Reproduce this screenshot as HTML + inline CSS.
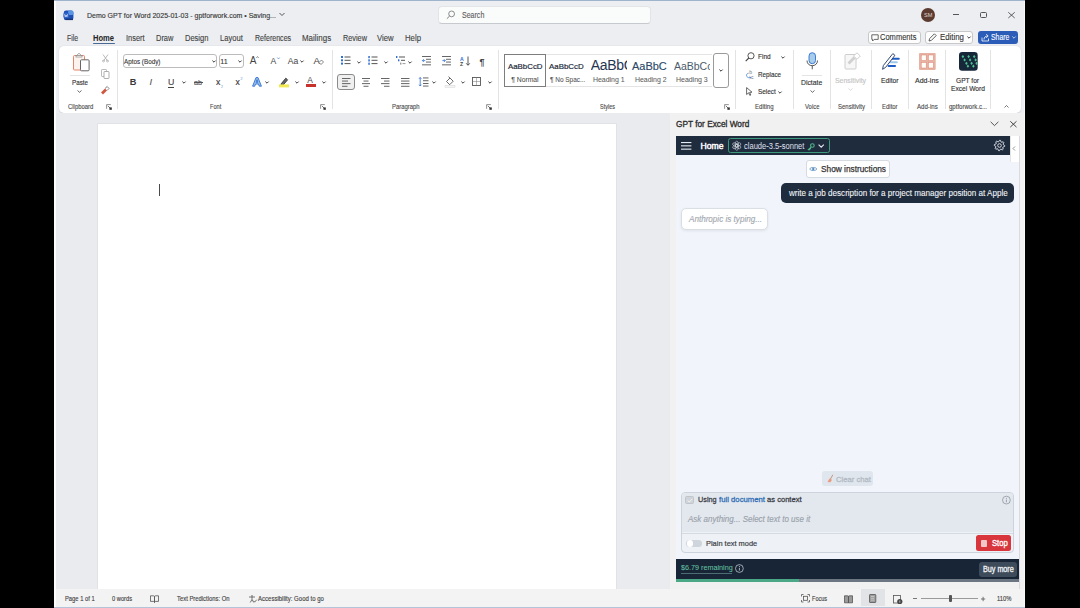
<!DOCTYPE html><html><head><meta charset="utf-8"><style>
html,body{margin:0;padding:0;}
body{width:1080px;height:608px;background:#000;position:relative;overflow:hidden;font-family:"Liberation Sans",sans-serif;}
.a{position:absolute;}
.t{position:absolute;white-space:nowrap;line-height:1;}
svg{overflow:visible}
</style></head><body>
<div class="a" style="left:54px;top:0px;width:971.00px;height:608.00px;background:#eceef1;"></div>
<div class="a" style="left:54px;top:0px;width:1.60px;height:608.00px;background:#fdfdfd;"></div>
<div class="a" style="left:1024px;top:0px;width:1.00px;height:608.00px;background:#f7f8fa;"></div>
<div class="a" style="left:54px;top:0px;width:971.00px;height:1.00px;background:#9fb3cc;"></div>
<svg class="a" style="left:63px;top:9.5px" width="11" height="11" viewBox="0 0 11 11"><rect x="0.8" y="0.5" width="9.6" height="9.6" rx="2.2" fill="#1f4fb5"/><rect x="5" y="0.5" width="5.4" height="4.5" rx="1.5" fill="#5b95e6"/><rect x="0.4" y="2.6" width="5.6" height="5.6" rx="2" fill="#2f63c9"/><path d="M1.6 4.2l.7 2.6.8-1.8.8 1.8.7-2.6" stroke="#e8eefa" stroke-width="0.7" fill="none"/><rect x="2.5" y="8.6" width="7.5" height="1.5" fill="#16357a"/></svg>
<div class="t" style="left:87.00px;top:12.00px;font-size:7.0px;color:#3a3a3a;-webkit-text-stroke:0.14px currentColor;">Demo GPT for Word 2025-01-03 - gptforwork.com • Saving...</div>
<svg class="a" style="left:279px;top:12px" width="6" height="5" viewBox="0 0 6 5"><path d="M0.5 1l2.5 2.5L5.5 1" stroke="#444" stroke-width="0.9" fill="none"/></svg>
<div class="a" style="left:438px;top:6px;width:212.50px;height:17.60px;background:#fafbfb;border:1px solid #e2e4e8;border-bottom:1.2px solid #c6c9ce;border-radius:4px;box-sizing:border-box;"></div>
<svg class="a" style="left:446px;top:10px" width="10" height="10" viewBox="0 0 10 10"><circle cx="5.6" cy="3.9" r="2.9" stroke="#707070" stroke-width="0.8" fill="none"/><path d="M3.6 6L0.9 8.7" stroke="#707070" stroke-width="0.9" /></svg>
<div class="t" style="left:462.00px;top:11.00px;font-size:8.5px;color:#606060;-webkit-text-stroke:0.12px currentColor;transform:scaleX(0.8280);transform-origin:0 0;">Search</div>
<div class="a" style="left:921px;top:7.8px;width:14px;height:14px;border-radius:50%;background:#5c3b30;"></div>
<div class="t" style="left:923.80px;top:13.00px;font-size:5.4px;color:#e0d4ce;-webkit-text-stroke:0px currentColor;transform:scaleX(1.0370);transform-origin:0 0;">SM</div>
<div class="a" style="left:952.6px;top:14.2px;width:6.20px;height:0.80px;background:#555;"></div>
<div class="a" style="left:980px;top:11.8px;width:7.00px;height:6.00px;border:0.9px solid #555;border-radius:1.5px;box-sizing:border-box;"></div>
<svg class="a" style="left:1008px;top:11.8px" width="7" height="6.2" viewBox="0 0 7 6.2"><path d="M0.3 0.3L6.7 6M6.7 0.3L0.3 6" stroke="#444" stroke-width="0.85"/></svg>
<div class="t" style="left:66.90px;top:34.00px;font-size:8.5px;color:#424242;-webkit-text-stroke:0.12px currentColor;transform:scaleX(0.8104);transform-origin:0 0;">File</div>
<div class="t" style="left:125.70px;top:34.00px;font-size:8.5px;color:#424242;-webkit-text-stroke:0.12px currentColor;transform:scaleX(0.8749);transform-origin:0 0;">Insert</div>
<div class="t" style="left:155.90px;top:34.00px;font-size:8.5px;color:#424242;-webkit-text-stroke:0.12px currentColor;transform:scaleX(0.8772);transform-origin:0 0;">Draw</div>
<div class="t" style="left:184.60px;top:34.00px;font-size:8.5px;color:#424242;-webkit-text-stroke:0.12px currentColor;transform:scaleX(0.8844);transform-origin:0 0;">Design</div>
<div class="t" style="left:219.60px;top:34.00px;font-size:8.5px;color:#424242;-webkit-text-stroke:0.12px currentColor;transform:scaleX(0.8934);transform-origin:0 0;">Layout</div>
<div class="t" style="left:254.60px;top:34.00px;font-size:8.5px;color:#424242;-webkit-text-stroke:0.12px currentColor;transform:scaleX(0.8305);transform-origin:0 0;">References</div>
<div class="t" style="left:302.40px;top:34.00px;font-size:8.5px;color:#424242;-webkit-text-stroke:0.12px currentColor;transform:scaleX(0.9334);transform-origin:0 0;">Mailings</div>
<div class="t" style="left:342.80px;top:34.00px;font-size:8.5px;color:#424242;-webkit-text-stroke:0.12px currentColor;transform:scaleX(0.8576);transform-origin:0 0;">Review</div>
<div class="t" style="left:377.40px;top:34.00px;font-size:8.5px;color:#424242;-webkit-text-stroke:0.12px currentColor;transform:scaleX(0.9086);transform-origin:0 0;">View</div>
<div class="t" style="left:404.60px;top:34.00px;font-size:8.5px;color:#424242;-webkit-text-stroke:0.12px currentColor;transform:scaleX(0.9152);transform-origin:0 0;">Help</div>
<div class="t" style="left:93.30px;top:34.00px;font-size:8.5px;color:#242424;-webkit-text-stroke:0.0px currentColor;font-weight:bold;transform:scaleX(0.8892);transform-origin:0 0;">Home</div>
<div class="a" style="left:93px;top:43.2px;width:21.50px;height:1.30px;background:#4a6a94;border-radius:1px;"></div>
<div class="a" style="left:868px;top:30.7px;width:52.60px;height:13.10px;background:#fdfdfd;border:1px solid #c8c8c8;border-radius:3px;box-sizing:border-box;"></div>
<svg class="a" style="left:871px;top:33.5px" width="8" height="8" viewBox="0 0 8 8"><path d="M0.8 0.8h6.4v4.6H3.2L1.6 7V5.4H0.8z" stroke="#444" stroke-width="0.8" fill="none" stroke-linejoin="round"/></svg>
<div class="t" style="left:880.00px;top:33.00px;font-size:8.4px;color:#333;-webkit-text-stroke:0.1px currentColor;transform:scaleX(0.8988);transform-origin:0 0;">Comments</div>
<div class="a" style="left:925.3px;top:30.7px;width:47.70px;height:13.10px;background:#fdfdfd;border:1px solid #c8c8c8;border-radius:3px;box-sizing:border-box;"></div>
<svg class="a" style="left:928px;top:32.8px" width="9" height="9" viewBox="0 0 9 9"><path d="M1 8L1.6 5.6 6.4 0.8 8.2 2.6 3.4 7.4z" stroke="#444" stroke-width="0.85" fill="none" stroke-linejoin="round"/></svg>
<div class="t" style="left:939.50px;top:33.00px;font-size:8.4px;color:#333;-webkit-text-stroke:0.1px currentColor;transform:scaleX(0.9344);transform-origin:0 0;">Editing</div>
<svg class="a" style="left:967px;top:35.8px" width="4" height="3" viewBox="0 0 4 3"><path d="M0.4 0.6L2 2.2 3.6 0.6" stroke="#333" stroke-width="0.95" fill="none"/></svg>
<div class="a" style="left:977.7px;top:30.7px;width:40.50px;height:13.10px;background:#2a5cb8;border-radius:3px;"></div>
<svg class="a" style="left:980.5px;top:32.5px" width="9" height="9" viewBox="0 0 9 9"><path d="M1 4.5v3.5h6.5V5.5" stroke="#fff" stroke-width="0.8" fill="none"/><path d="M3 6.5c0-2 1.3-3.5 3.6-3.5M5.2 1.2L7.2 3 5.2 4.8" stroke="#fff" stroke-width="0.8" fill="none"/></svg>
<div class="t" style="left:990.50px;top:33.00px;font-size:8.4px;color:#fff;-webkit-text-stroke:0.1px currentColor;transform:scaleX(0.8253);transform-origin:0 0;">Share</div>
<svg class="a" style="left:1011.5px;top:35.8px" width="4" height="3" viewBox="0 0 4 3"><path d="M0.3 0.5L2 2.2 3.7 0.5" stroke="#fff" stroke-width="0.7" fill="none"/></svg>
<div class="a" style="left:58.5px;top:46px;width:962.5px;height:66.6px;background:#fff;border-radius:5px;box-shadow:0 0.5px 1.5px rgba(0,0,0,0.13);"></div>
<div class="a" style="left:116.8px;top:50px;width:1.00px;height:59.00px;background:#e3e3e3;"></div>
<div class="a" style="left:331.5px;top:50px;width:1.00px;height:59.00px;background:#e3e3e3;"></div>
<div class="a" style="left:497.5px;top:50px;width:1.00px;height:59.00px;background:#e3e3e3;"></div>
<div class="a" style="left:735.0px;top:50px;width:1.00px;height:59.00px;background:#e3e3e3;"></div>
<div class="a" style="left:792.9px;top:50px;width:1.00px;height:59.00px;background:#e3e3e3;"></div>
<div class="a" style="left:830.3px;top:50px;width:1.00px;height:59.00px;background:#e3e3e3;"></div>
<div class="a" style="left:871.2px;top:50px;width:1.00px;height:59.00px;background:#e3e3e3;"></div>
<div class="a" style="left:907.5px;top:50px;width:1.00px;height:59.00px;background:#e3e3e3;"></div>
<div class="a" style="left:944.8px;top:50px;width:1.00px;height:59.00px;background:#e3e3e3;"></div>
<div class="a" style="left:989.7px;top:50px;width:1.00px;height:59.00px;background:#e3e3e3;"></div>
<div class="t" style="left:67.80px;top:103.00px;font-size:7.0px;color:#4a4a4a;-webkit-text-stroke:0.12px currentColor;transform:scaleX(0.8444);transform-origin:0 0;">Clipboard</div>
<div class="t" style="left:210.00px;top:103.00px;font-size:7.0px;color:#4a4a4a;-webkit-text-stroke:0.12px currentColor;transform:scaleX(0.8067);transform-origin:0 0;">Font</div>
<div class="t" style="left:391.70px;top:103.00px;font-size:7.0px;color:#4a4a4a;-webkit-text-stroke:0.12px currentColor;transform:scaleX(0.8443);transform-origin:0 0;">Paragraph</div>
<div class="t" style="left:600.00px;top:103.00px;font-size:7.0px;color:#4a4a4a;-webkit-text-stroke:0.12px currentColor;transform:scaleX(0.7869);transform-origin:0 0;">Styles</div>
<div class="t" style="left:755.30px;top:103.00px;font-size:7.0px;color:#4a4a4a;-webkit-text-stroke:0.12px currentColor;transform:scaleX(0.8643);transform-origin:0 0;">Editing</div>
<div class="t" style="left:804.90px;top:103.00px;font-size:7.0px;color:#4a4a4a;-webkit-text-stroke:0.12px currentColor;transform:scaleX(0.8409);transform-origin:0 0;">Voice</div>
<div class="t" style="left:837.70px;top:103.00px;font-size:7.0px;color:#4a4a4a;-webkit-text-stroke:0.12px currentColor;transform:scaleX(0.8569);transform-origin:0 0;">Sensitivity</div>
<div class="t" style="left:882.00px;top:103.00px;font-size:7.0px;color:#4a4a4a;-webkit-text-stroke:0.12px currentColor;transform:scaleX(0.8531);transform-origin:0 0;">Editor</div>
<div class="t" style="left:916.50px;top:103.00px;font-size:7.0px;color:#4a4a4a;-webkit-text-stroke:0.12px currentColor;transform:scaleX(0.8721);transform-origin:0 0;">Add-ins</div>
<div class="t" style="left:948.80px;top:103.00px;font-size:7.0px;color:#4a4a4a;-webkit-text-stroke:0.12px currentColor;transform:scaleX(0.8645);transform-origin:0 0;">gptforwork.c...</div>
<svg class="a" style="left:106.4px;top:103.5px" width="6" height="6" viewBox="0 0 6 6"><path d="M0.6 4.8V0.6H4.8" stroke="#777" stroke-width="0.8" fill="none"/><path d="M1.8 1.8L4.6 4.6" stroke="#555" stroke-width="0.8"/><rect x="3.4" y="3.4" width="2.4" height="2.4" fill="#333"/></svg>
<svg class="a" style="left:320.3px;top:103.5px" width="6" height="6" viewBox="0 0 6 6"><path d="M0.6 4.8V0.6H4.8" stroke="#777" stroke-width="0.8" fill="none"/><path d="M1.8 1.8L4.6 4.6" stroke="#555" stroke-width="0.8"/><rect x="3.4" y="3.4" width="2.4" height="2.4" fill="#333"/></svg>
<svg class="a" style="left:486px;top:103.5px" width="6" height="6" viewBox="0 0 6 6"><path d="M0.6 4.8V0.6H4.8" stroke="#777" stroke-width="0.8" fill="none"/><path d="M1.8 1.8L4.6 4.6" stroke="#555" stroke-width="0.8"/><rect x="3.4" y="3.4" width="2.4" height="2.4" fill="#333"/></svg>
<svg class="a" style="left:724px;top:103.5px" width="6" height="6" viewBox="0 0 6 6"><path d="M0.6 4.8V0.6H4.8" stroke="#777" stroke-width="0.8" fill="none"/><path d="M1.8 1.8L4.6 4.6" stroke="#555" stroke-width="0.8"/><rect x="3.4" y="3.4" width="2.4" height="2.4" fill="#333"/></svg>
<svg class="a" style="left:72px;top:52px" width="19" height="20" viewBox="0 0 19 20"><rect x="1.5" y="3.5" width="11" height="14.5" rx="1" stroke="#e2856b" stroke-width="1" fill="#fdf3ee"/><path d="M4.2 4L7 1.2 9.8 4z" stroke="#888" stroke-width="0.8" fill="#fff" stroke-linejoin="round"/><rect x="4" y="3.6" width="6" height="1.4" fill="#fff" stroke="#888" stroke-width="0.7"/><rect x="8.5" y="7.8" width="8.6" height="11" rx="1" stroke="#666" stroke-width="1" fill="#fff"/></svg>
<div class="a" style="left:70px;top:75px;width:20.00px;height:0.80px;background:#e4e4e4;"></div>
<div class="t" style="left:71.80px;top:79.00px;font-size:7.2px;color:#333;-webkit-text-stroke:0.14px currentColor;transform:scaleX(0.8690);transform-origin:0 0;">Paste</div>
<svg class="a" style="left:77px;top:89.5px" width="5" height="3" viewBox="0 0 5 3"><path d="M0.5 0.5L2.5 2.3 4.5 0.5" stroke="#444" stroke-width="0.8" fill="none"/></svg>
<svg class="a" style="left:101.5px;top:53.5px" width="7" height="8" viewBox="0 0 7 8"><path d="M1 0.5L5.5 7M6 0.5L1.5 7" stroke="#aaa" stroke-width="0.8"/><circle cx="1.5" cy="7" r="1" fill="none" stroke="#aaa" stroke-width="0.7"/><circle cx="5.5" cy="7" r="1" fill="none" stroke="#aaa" stroke-width="0.7"/></svg>
<svg class="a" style="left:101px;top:68.5px" width="9" height="10" viewBox="0 0 9 10"><rect x="0.5" y="0.5" width="5" height="7" rx="0.6" stroke="#aaa" stroke-width="0.8" fill="#fff"/><rect x="3" y="2.5" width="5" height="7" rx="0.6" stroke="#999" stroke-width="0.8" fill="#fff"/></svg>
<svg class="a" style="left:100px;top:86px" width="10" height="9" viewBox="0 0 10 9"><path d="M1 6.5L5 2.5 7 4.5 3 8.5z" fill="#d2553e"/><path d="M5 2.5L7.2 0.5 9 2.5 7 4.5" stroke="#666" stroke-width="0.8" fill="none"/></svg>
<div class="a" style="left:122.6px;top:54.2px;width:94.40px;height:13.50px;border:1px solid #bcbcbc;border-radius:3px;box-sizing:border-box;background:#fff;"></div>
<div class="t" style="left:124.20px;top:58.00px;font-size:7.2px;color:#333;-webkit-text-stroke:0.1px currentColor;transform:scaleX(0.8770);transform-origin:0 0;">Aptos (Body)</div>
<svg class="a" style="left:211.5px;top:60px" width="4" height="3" viewBox="0 0 4 3"><path d="M0.4 0.6L2 2.2 3.6 0.6" stroke="#333" stroke-width="0.95" fill="none"/></svg>
<div class="a" style="left:218.5px;top:54.2px;width:25.30px;height:13.50px;border:1px solid #bcbcbc;border-radius:3px;box-sizing:border-box;background:#fff;"></div>
<div class="t" style="left:220.30px;top:58.00px;font-size:7.2px;color:#333;-webkit-text-stroke:0.1px currentColor;">11</div>
<svg class="a" style="left:237.8px;top:60px" width="4" height="3" viewBox="0 0 4 3"><path d="M0.4 0.6L2 2.2 3.6 0.6" stroke="#333" stroke-width="0.95" fill="none"/></svg>
<div class="t" style="left:129.80px;top:78.00px;font-size:9.2px;color:#3a3a3a;-webkit-text-stroke:0.0px currentColor;font-weight:bold;">B</div>
<div class="t" style="left:149.60px;top:77.00px;font-size:9.4px;color:#555;-webkit-text-stroke:0.1px currentColor;font-style:italic;font-family:"Liberation Serif",serif;">I</div>
<div class="t" style="left:168.10px;top:78.00px;font-size:8.8px;color:#444;-webkit-text-stroke:0.1px currentColor;">U</div>
<div class="a" style="left:168.3px;top:86.6px;width:5.70px;height:0.70px;background:#444;"></div>
<svg class="a" style="left:182px;top:80.5px" width="4" height="3" viewBox="0 0 4 3"><path d="M0.4 0.6L2 2.2 3.6 0.6" stroke="#333" stroke-width="0.95" fill="none"/></svg>
<div class="t" style="left:194.00px;top:80.00px;font-size:6.5px;color:#555;-webkit-text-stroke:0.14px currentColor;transform:scaleX(1.1065);transform-origin:0 0;">ab</div>
<div class="a" style="left:193.5px;top:81.5px;width:9.50px;height:0.80px;background:#555;"></div>
<div class="t" style="left:216.00px;top:78.00px;font-size:8.6px;color:#333;-webkit-text-stroke:0.15px currentColor;">x</div>
<div class="t" style="left:221.00px;top:86.00px;font-size:3.5px;color:#8fb4e0;-webkit-text-stroke:0.14px currentColor;">2</div>
<div class="t" style="left:235.40px;top:78.00px;font-size:8.6px;color:#333;-webkit-text-stroke:0.15px currentColor;">x</div>
<div class="t" style="left:240.50px;top:78.00px;font-size:3.5px;color:#8fb4e0;-webkit-text-stroke:0.14px currentColor;">2</div>
<div class="t" style="left:249.80px;top:56.00px;font-size:10px;color:#444;-webkit-text-stroke:0px currentColor;">A</div>
<svg class="a" style="left:256px;top:55.8px" width="3" height="2.5" viewBox="0 0 3 2.5"><path d="M0.3 2L1.5 0.5 2.7 2" stroke="#555" stroke-width="0.6" fill="none"/></svg>
<div class="t" style="left:270.50px;top:57.00px;font-size:8.6px;color:#444;-webkit-text-stroke:0px currentColor;">A</div>
<svg class="a" style="left:276.5px;top:56.5px" width="3" height="2.5" viewBox="0 0 3 2.5"><path d="M0.3 0.5L1.5 2 2.7 0.5" stroke="#3b7bd0" stroke-width="0.6" fill="none"/></svg>
<div class="t" style="left:287.80px;top:57.00px;font-size:8.6px;color:#444;-webkit-text-stroke:0px currentColor;">Aa</div>
<svg class="a" style="left:299.5px;top:59.8px" width="4" height="3" viewBox="0 0 4 3"><path d="M0.4 0.6L2 2.2 3.6 0.6" stroke="#333" stroke-width="0.95" fill="none"/></svg>
<div class="t" style="left:313.60px;top:56.00px;font-size:9.6px;color:#444;-webkit-text-stroke:0px currentColor;">A</div>
<svg class="a" style="left:318px;top:59px" width="6" height="6" viewBox="0 0 6 6"><path d="M1 3.5L3.5 1 5.5 3 3 5.5z" stroke="#555" stroke-width="0.7" fill="#fff"/></svg>
<svg class="a" style="left:251.5px;top:77px" width="10" height="10" viewBox="0 0 10 10"><path d="M0.6 9.2L4 0.6h2L9.4 9.2H7.3L6.5 7H3.5L2.7 9.2z M4.1 5.3h1.8L5 2.7z" stroke="#2f6fcf" stroke-width="0.9" fill="#9cc3ee" fill-rule="evenodd" stroke-linejoin="round"/></svg>
<svg class="a" style="left:264.5px;top:80.5px" width="4" height="3" viewBox="0 0 4 3"><path d="M0.4 0.6L2 2.2 3.6 0.6" stroke="#333" stroke-width="0.95" fill="none"/></svg>
<svg class="a" style="left:278.8px;top:76.5px" width="10" height="11" viewBox="0 0 10 11"><path d="M2.2 6.8L6.8 1.2 8.6 2.8 4 8.2H2.2z" stroke="#333" stroke-width="0.9" fill="#666" stroke-linejoin="round"/><rect x="0" y="7.4" width="10" height="3" fill="#f2ea50"/></svg>
<svg class="a" style="left:294.5px;top:80.5px" width="4" height="3" viewBox="0 0 4 3"><path d="M0.4 0.6L2 2.2 3.6 0.6" stroke="#333" stroke-width="0.95" fill="none"/></svg>
<div class="t" style="left:307.20px;top:76.00px;font-size:8.4px;color:#444;-webkit-text-stroke:0px currentColor;">A</div>
<div class="a" style="left:306.2px;top:84px;width:9.80px;height:2.80px;background:#c8322c;"></div>
<svg class="a" style="left:321.6px;top:80.5px" width="4" height="3" viewBox="0 0 4 3"><path d="M0.4 0.6L2 2.2 3.6 0.6" stroke="#333" stroke-width="0.95" fill="none"/></svg>
<svg class="a" style="left:340.5px;top:56px" width="11" height="10" viewBox="0 0 11 10"><rect x="0" y="0.0" width="2" height="2" fill="#2f6fcf"/><rect x="3.5" y="0.5" width="6" height="1" fill="#555"/><rect x="0" y="3.3" width="2" height="2" fill="#2f6fcf"/><rect x="3.5" y="3.8" width="6" height="1" fill="#555"/><rect x="0" y="6.6" width="2" height="2" fill="#2f6fcf"/><rect x="3.5" y="7.1" width="6" height="1" fill="#555"/></svg>
<svg class="a" style="left:357px;top:60.5px" width="4" height="3" viewBox="0 0 4 3"><path d="M0.4 0.6L2 2.2 3.6 0.6" stroke="#333" stroke-width="0.95" fill="none"/></svg>
<svg class="a" style="left:368px;top:56px" width="11" height="10" viewBox="0 0 11 10"><rect x="0.3" y="0.0" width="1.5" height="2.2" fill="#2f6fcf"/><rect x="3.5" y="0.5" width="6" height="1" fill="#555"/><rect x="0.3" y="3.3" width="1.5" height="2.2" fill="#2f6fcf"/><rect x="3.5" y="3.8" width="6" height="1" fill="#555"/><rect x="0.3" y="6.6" width="1.5" height="2.2" fill="#2f6fcf"/><rect x="3.5" y="7.1" width="6" height="1" fill="#555"/></svg>
<svg class="a" style="left:384px;top:60.5px" width="4" height="3" viewBox="0 0 4 3"><path d="M0.4 0.6L2 2.2 3.6 0.6" stroke="#333" stroke-width="0.95" fill="none"/></svg>
<svg class="a" style="left:395.5px;top:56px" width="11" height="10" viewBox="0 0 11 10"><rect x="0" y="0" width="1.4" height="2" fill="#2f6fcf"/><rect x="3" y="0.5" width="6" height="1" fill="#555"/><rect x="2" y="3.3" width="1.4" height="2" fill="#2f6fcf"/><rect x="5" y="3.8" width="4" height="1" fill="#555"/><rect x="4" y="6.6" width="1.4" height="2" fill="#999"/><rect x="6.5" y="7.1" width="3" height="1" fill="#999"/></svg>
<svg class="a" style="left:407.5px;top:60.5px" width="4" height="3" viewBox="0 0 4 3"><path d="M0.4 0.6L2 2.2 3.6 0.6" stroke="#333" stroke-width="0.95" fill="none"/></svg>
<svg class="a" style="left:422px;top:56px" width="9" height="10" viewBox="0 0 9 10"><rect x="0" y="0" width="9" height="0.9" fill="#555"/><rect x="4" y="2.8" width="5" height="0.9" fill="#555"/><rect x="4" y="5.6" width="5" height="0.9" fill="#555"/><rect x="0" y="8.4" width="9" height="0.9" fill="#555"/><path d="M0.5 4.6h2.8M1.8 3.2L0.4 4.6 1.8 6" stroke="#2f6fcf" stroke-width="0.8" fill="none"/></svg>
<svg class="a" style="left:441.6px;top:56px" width="9" height="10" viewBox="0 0 9 10"><rect x="0" y="0" width="9" height="0.9" fill="#555"/><rect x="4" y="2.8" width="5" height="0.9" fill="#555"/><rect x="4" y="5.6" width="5" height="0.9" fill="#555"/><rect x="0" y="8.4" width="9" height="0.9" fill="#555"/><path d="M0.4 4.6h2.8M1.9 3.2L3.3 4.6 1.9 6" stroke="#2f6fcf" stroke-width="0.8" fill="none"/></svg>
<svg class="a" style="left:459.5px;top:56px" width="11" height="11" viewBox="0 0 11 11"><text x="0" y="4.6" font-size="5.2" font-family="Liberation Sans" fill="#2f6fcf" font-weight="bold">A</text><text x="0" y="9.8" font-size="5.2" font-family="Liberation Sans" fill="#444" font-weight="bold">Z</text><path d="M8 0.5v8.5M6.2 7.3L8 9.3 9.8 7.3" stroke="#444" stroke-width="0.9" fill="none"/></svg>
<div class="t" style="left:479.60px;top:58.00px;font-size:9px;color:#444;-webkit-text-stroke:0.0px currentColor;font-weight:bold;">¶</div>
<div class="a" style="left:336.7px;top:73.7px;width:18.60px;height:16.10px;background:#f0f0f0;border:1px solid #8a8a8a;border-radius:3px;box-sizing:border-box;"></div>
<svg class="a" style="left:342px;top:77.5px" width="9" height="9" viewBox="0 0 9 9"><rect x="0" y="0" width="8.5" height="0.9" fill="#555"/><rect x="0" y="2.6" width="6" height="0.9" fill="#555"/><rect x="0" y="5.2" width="8.5" height="0.9" fill="#555"/><rect x="0" y="7.8" width="5.5" height="0.9" fill="#555"/></svg>
<svg class="a" style="left:361.6px;top:77.5px" width="9" height="9" viewBox="0 0 9 9"><rect x="0" y="0" width="8" height="0.9" fill="#555"/><rect x="1.5" y="2.6" width="5" height="0.9" fill="#555"/><rect x="0" y="5.2" width="8" height="0.9" fill="#555"/><rect x="1.5" y="7.8" width="5" height="0.9" fill="#555"/></svg>
<svg class="a" style="left:381.2px;top:77.5px" width="9" height="9" viewBox="0 0 9 9"><rect x="0" y="0" width="8.5" height="0.9" fill="#555"/><rect x="3" y="2.6" width="5.5" height="0.9" fill="#555"/><rect x="0" y="5.2" width="8.5" height="0.9" fill="#555"/><rect x="3" y="7.8" width="5.5" height="0.9" fill="#555"/></svg>
<svg class="a" style="left:400.8px;top:77.5px" width="9" height="9" viewBox="0 0 9 9"><rect x="0" y="0" width="8.5" height="0.9" fill="#555"/><rect x="0" y="2.6" width="8.5" height="0.9" fill="#555"/><rect x="0" y="5.2" width="8.5" height="0.9" fill="#555"/><rect x="0" y="7.8" width="8.5" height="0.9" fill="#555"/></svg>
<svg class="a" style="left:419.2px;top:76.8px" width="10" height="10" viewBox="0 0 10 10"><path d="M1.2 0.5v8.5M0 1.8L1.2 0.5 2.4 1.8M0 7.7L1.2 9 2.4 7.7" stroke="#2f6fcf" stroke-width="0.8" fill="none"/><rect x="4" y="0.5" width="5.5" height="0.9" fill="#555"/><rect x="4" y="3.3" width="5.5" height="0.9" fill="#555"/><rect x="4" y="6.1" width="5.5" height="0.9" fill="#555"/><rect x="4" y="8.6" width="5.5" height="0.9" fill="#555"/></svg>
<svg class="a" style="left:431.5px;top:80.5px" width="4" height="3" viewBox="0 0 4 3"><path d="M0.4 0.6L2 2.2 3.6 0.6" stroke="#333" stroke-width="0.95" fill="none"/></svg>
<svg class="a" style="left:444.5px;top:76.5px" width="10" height="11" viewBox="0 0 10 11"><path d="M1.5 4.5L5 1 8.2 4.2 4.7 7.7z" stroke="#444" stroke-width="0.8" fill="#fff"/><path d="M5 1L3.5 -0.3" stroke="#444" stroke-width="0.8"/><rect x="0" y="8.5" width="10" height="1.8" fill="#f4f4f4" stroke="#ccc" stroke-width="0.4"/></svg>
<svg class="a" style="left:460.8px;top:80.5px" width="4" height="3" viewBox="0 0 4 3"><path d="M0.4 0.6L2 2.2 3.6 0.6" stroke="#333" stroke-width="0.95" fill="none"/></svg>
<svg class="a" style="left:472px;top:77px" width="9" height="9" viewBox="0 0 9 9"><rect x="0.5" y="0.5" width="8" height="8" stroke="#555" stroke-width="0.9" fill="none"/><path d="M4.5 0.5v8M0.5 4.5h8" stroke="#777" stroke-width="0.5"/></svg>
<svg class="a" style="left:488px;top:80.5px" width="4" height="3" viewBox="0 0 4 3"><path d="M0.4 0.6L2 2.2 3.6 0.6" stroke="#333" stroke-width="0.95" fill="none"/></svg>
<div class="a" style="left:504.3px;top:54.1px;width:207.70px;height:32.90px;border:1px solid #e4e4e4;border-right:none;box-sizing:border-box;"></div>
<div class="a" style="left:504.3px;top:54.1px;width:41.80px;height:32.50px;border:1.4px solid #7d7d7d;box-sizing:border-box;"></div>
<div class="t" style="left:507.80px;top:63.00px;font-size:8.0px;color:#1d2b3a;-webkit-text-stroke:0.2px currentColor;transform:scaleX(0.9822);transform-origin:0 0;">AaBbCcD</div>
<div class="t" style="left:511.20px;top:77.00px;font-size:6.8px;color:#505050;-webkit-text-stroke:0.06px currentColor;">¶ Normal</div>
<div class="t" style="left:549.20px;top:63.00px;font-size:8.0px;color:#1d2b3a;-webkit-text-stroke:0.2px currentColor;transform:scaleX(0.9850);transform-origin:0 0;">AaBbCcD</div>
<div class="t" style="left:549.60px;top:77.00px;font-size:6.8px;color:#505050;-webkit-text-stroke:0.06px currentColor;transform:scaleX(0.9493);transform-origin:0 0;">¶ No Spac...</div>
<div class="a" style="left:590.8px;top:56px;width:36.5px;height:16px;overflow:hidden;"><div class="t" style="left:0;top:2.05px;font-size:14px;color:#1f3552;letter-spacing:-0.3px">AaBbC</div></div>
<div class="t" style="left:592.70px;top:77.00px;font-size:6.8px;color:#606060;-webkit-text-stroke:0.06px currentColor;transform:scaleX(1.0193);transform-origin:0 0;">Heading 1</div>
<div class="t" style="left:632.40px;top:61.00px;font-size:11.5px;color:#2a4868;-webkit-text-stroke:0.14px currentColor;transform:scaleX(0.9551);transform-origin:0 0;">AaBbC</div>
<div class="t" style="left:634.60px;top:77.00px;font-size:6.8px;color:#606060;-webkit-text-stroke:0.06px currentColor;transform:scaleX(1.0193);transform-origin:0 0;">Heading 2</div>
<div class="a" style="left:673.9px;top:56px;width:36px;height:16px;overflow:hidden;"><div class="t" style="left:0;top:5.01px;font-size:10.5px;color:#4b5b6c;">AaBbCcD</div></div>
<div class="t" style="left:676.00px;top:77.00px;font-size:6.8px;color:#606060;-webkit-text-stroke:0.06px currentColor;transform:scaleX(1.0225);transform-origin:0 0;">Heading 3</div>
<div class="a" style="left:713.1px;top:52.9px;width:16.30px;height:34.80px;border:1px solid #9a9a9a;border-radius:3px;box-sizing:border-box;background:#fff;"></div>
<svg class="a" style="left:719.3px;top:69px" width="4" height="3" viewBox="0 0 4 3"><path d="M0.4 0.6L2 2.2 3.6 0.6" stroke="#333" stroke-width="1" fill="none"/></svg>
<svg class="a" style="left:745px;top:51.5px" width="10" height="10" viewBox="0 0 10 10"><circle cx="6" cy="3.8" r="3.1" stroke="#444" stroke-width="0.9" fill="none"/><path d="M3.8 6L0.7 9.1" stroke="#444" stroke-width="1.1"/></svg>
<div class="t" style="left:758.20px;top:53.00px;font-size:7.4px;color:#333;-webkit-text-stroke:0.14px currentColor;transform:scaleX(0.8822);transform-origin:0 0;">Find</div>
<svg class="a" style="left:780.5px;top:56px" width="4" height="3" viewBox="0 0 4 3"><path d="M0.4 0.6L2 2.2 3.6 0.6" stroke="#333" stroke-width="0.95" fill="none"/></svg>
<svg class="a" style="left:744.5px;top:69.5px" width="10" height="10" viewBox="0 0 10 10"><text x="4.2" y="4" font-size="5" font-family="Liberation Sans" fill="#777">b</text><text x="6" y="9.3" font-size="5" font-family="Liberation Sans" fill="#666">c</text><path d="M3.6 3.2C1 3.6 0.6 6.6 3.4 7.6h2.4M4.6 6.4l1.3 1.2-1.3 1.2" stroke="#3d7fd6" stroke-width="0.8" fill="none"/></svg>
<div class="t" style="left:758.20px;top:71.00px;font-size:7.4px;color:#333;-webkit-text-stroke:0.14px currentColor;transform:scaleX(0.8508);transform-origin:0 0;">Replace</div>
<svg class="a" style="left:746px;top:87px" width="7" height="9" viewBox="0 0 7 9"><path d="M0.6 0.6L6 5.2 3.6 5.4 4.8 8 3.8 8.4 2.6 5.8 0.6 7.5z" stroke="#444" stroke-width="0.8" fill="#fff" stroke-linejoin="round"/></svg>
<div class="t" style="left:758.20px;top:88.00px;font-size:7.4px;color:#333;-webkit-text-stroke:0.14px currentColor;transform:scaleX(0.8703);transform-origin:0 0;">Select</div>
<svg class="a" style="left:777.5px;top:90.5px" width="4" height="3" viewBox="0 0 4 3"><path d="M0.4 0.6L2 2.2 3.6 0.6" stroke="#333" stroke-width="0.95" fill="none"/></svg>
<svg class="a" style="left:806px;top:52px" width="13" height="18.5" viewBox="0 0 13 18.5"><rect x="3" y="0.7" width="6.5" height="11" rx="3.25" fill="#a8cdea" stroke="#2f6fcf" stroke-width="0.9"/><path d="M1 8.5c0 3.3 2.4 5.2 5.25 5.2S11.5 11.8 11.5 8.5M6.25 13.7v3.6" stroke="#444" stroke-width="0.9" fill="none"/></svg>
<div class="a" style="left:802px;top:75px;width:20.00px;height:0.70px;background:#e4e4e4;"></div>
<div class="t" style="left:801.40px;top:79.00px;font-size:7.4px;color:#333;-webkit-text-stroke:0.14px currentColor;transform:scaleX(0.9248);transform-origin:0 0;">Dictate</div>
<svg class="a" style="left:810px;top:89.5px" width="5" height="3" viewBox="0 0 5 3"><path d="M0.5 0.5L2.5 2.3 4.5 0.5" stroke="#444" stroke-width="0.8" fill="none"/></svg>
<svg class="a" style="left:843.5px;top:52px" width="18" height="18.5" viewBox="0 0 18 18.5"><rect x="1" y="2.5" width="11" height="14.5" rx="1" stroke="#c8c8c8" stroke-width="0.9" fill="#f7f7f7"/><path d="M4 11l6-6M5 12l6-6" stroke="#cfcfcf" stroke-width="1.4"/><path d="M9.5 4L13 0.8 16.3 4 13 7.3z" stroke="#c8c8c8" stroke-width="0.9" fill="#fff"/></svg>
<div class="t" style="left:835.40px;top:77.00px;font-size:7.4px;color:#c4c4c4;-webkit-text-stroke:0.14px currentColor;transform:scaleX(0.9336);transform-origin:0 0;">Sensitivity</div>
<svg class="a" style="left:848px;top:88px" width="5" height="3" viewBox="0 0 5 3"><path d="M0.5 0.5L2.5 2.3 4.5 0.5" stroke="#c8c8c8" stroke-width="0.7" fill="none"/></svg>
<svg class="a" style="left:880.5px;top:52px" width="19" height="18.5" viewBox="0 0 19 18.5"><path d="M9.5 6.7h8.2" stroke="#1f5bc4" stroke-width="2.1" stroke-linecap="round"/><path d="M8.6 10.3h7.2" stroke="#9cc8ea" stroke-width="2" stroke-linecap="round"/><path d="M7.6 14h6.4" stroke="#1f5bc4" stroke-width="2.1" stroke-linecap="round"/><path d="M1.6 17.3L2.3 13.6 11.8 1.6 13.9 3.3 4.6 15.4z" stroke="#1d3566" stroke-width="0.9" fill="#fff" stroke-linejoin="round"/></svg>
<div class="t" style="left:881.20px;top:77.00px;font-size:7.4px;color:#333;-webkit-text-stroke:0.14px currentColor;transform:scaleX(0.9053);transform-origin:0 0;">Editor</div>
<svg class="a" style="left:918.8px;top:53px" width="17" height="17" viewBox="0 0 17 17"><rect x="0" y="0" width="16.7" height="16.9" rx="0.8" fill="#e6b3a3"/><g fill="#fffdf8" stroke="#de7f72" stroke-width="0.5"><rect x="2.2" y="2" width="5" height="5.6"/><rect x="9.4" y="2" width="5" height="5.6"/><rect x="2.2" y="9.4" width="5" height="5.6"/><rect x="9.4" y="9.4" width="5" height="5.6"/></g></svg>
<div class="t" style="left:915.10px;top:77.00px;font-size:7.4px;color:#333;-webkit-text-stroke:0.14px currentColor;transform:scaleX(0.9525);transform-origin:0 0;">Add-ins</div>
<svg class="a" style="left:958.6px;top:52.3px" width="19" height="19" viewBox="0 0 19 19"><defs><clipPath id="gc"><rect x="0" y="0" width="18.7" height="18.8" rx="3.2"/></clipPath></defs><rect x="0" y="0" width="18.7" height="18.8" rx="3.2" fill="#17273a"/><g clip-path="url(#gc)"><path d="M3.9 2.9999999999999996L5.2 4.6L3.9 6.199999999999999L2.5999999999999996 4.6z" fill="#4cc293"/><path d="M9.6 2.9999999999999996L10.9 4.6L9.6 6.199999999999999L8.299999999999999 4.6z" fill="#4cc293"/><path d="M15.2 2.9999999999999996L16.5 4.6L15.2 6.199999999999999L13.899999999999999 4.6z" fill="#4cc293"/><path d="M5.6 6.300000000000001L6.8999999999999995 7.9L5.6 9.5L4.3 7.9z" fill="#4cc293"/><path d="M11.1 6.300000000000001L12.4 7.9L11.1 9.5L9.799999999999999 7.9z" fill="#4cc293"/><path d="M16.6 6.300000000000001L17.900000000000002 7.9L16.6 9.5L15.3 7.9z" fill="#4cc293"/><path d="M7.4 9.700000000000001L8.700000000000001 11.3L7.4 12.9L6.1000000000000005 11.3z" fill="#4cc293"/><path d="M12.6 9.700000000000001L13.9 11.3L12.6 12.9L11.299999999999999 11.3z" fill="#4cc293"/><path d="M17.6 9.700000000000001L18.900000000000002 11.3L17.6 12.9L16.3 11.3z" fill="#4cc293"/><path d="M8.9 12.6L10.200000000000001 14.2L8.9 15.799999999999999L7.6000000000000005 14.2z" fill="#4cc293"/><path d="M14.4 12.6L15.700000000000001 14.2L14.4 15.799999999999999L13.1 14.2z" fill="#4cc293"/></g></svg>
<div class="t" style="left:956.20px;top:77.00px;font-size:7.4px;color:#333;-webkit-text-stroke:0.14px currentColor;transform:scaleX(0.8964);transform-origin:0 0;">GPT for</div>
<div class="t" style="left:950.80px;top:85.00px;font-size:7.4px;color:#333;-webkit-text-stroke:0.14px currentColor;transform:scaleX(0.9019);transform-origin:0 0;">Excel Word</div>
<svg class="a" style="left:1003.5px;top:104.5px" width="5" height="3" viewBox="0 0 5 3"><path d="M0.5 2.5L2.5 0.5 4.5 2.5" stroke="#555" stroke-width="0.8" fill="none"/></svg>
<div class="a" style="left:56px;top:112.6px;width:614.30px;height:476.40px;background:#e9ebee;"></div>
<div class="a" style="left:98.2px;top:124px;width:518.00px;height:465.00px;background:#fff;box-shadow:0 0 0 0.7px #dcdfe3;"></div>
<div class="a" style="left:158.6px;top:184px;width:1.30px;height:12.30px;background:#4a4a4a;"></div>
<div class="a" style="left:670.3px;top:112.6px;width:353.70px;height:476.40px;background:#f1f1f1;"></div>
<div class="t" style="left:675.80px;top:120.00px;font-size:8.6px;color:#2b2b2b;-webkit-text-stroke:0.32px currentColor;transform:scaleX(0.9639);transform-origin:0 0;">GPT for Excel Word</div>
<svg class="a" style="left:990px;top:121px" width="9" height="6" viewBox="0 0 9 6"><path d="M0.6 0.8L4.5 4.6 8.4 0.8" stroke="#444" stroke-width="0.9" fill="none"/></svg>
<svg class="a" style="left:1010.2px;top:120.7px" width="7" height="6.4" viewBox="0 0 7 6.4"><path d="M0.3 0.3L6.5 6.1M6.5 0.3L0.3 6.1" stroke="#3a3a3a" stroke-width="0.95"/></svg>
<div class="a" style="left:676px;top:135.8px;width:343.50px;height:446.20px;background:#f1f4fa;"></div>
<div class="a" style="left:1019px;top:135.8px;width:1.00px;height:453.20px;background:#d9dbde;"></div>
<div class="a" style="left:676px;top:135.8px;width:334.00px;height:18.80px;background:#1f2c3e;"></div>
<div class="a" style="left:1010px;top:136px;width:8.60px;height:25.70px;background:#fff;border-left:1px solid #e5e5e5;box-sizing:border-box;"></div>
<svg class="a" style="left:1012.3px;top:145.5px" width="4" height="5" viewBox="0 0 4 5"><path d="M3 0.5L1 2.5 3 4.5" stroke="#666" stroke-width="0.7" fill="none"/></svg>
<svg class="a" style="left:680.8px;top:142px" width="10.5" height="8" viewBox="0 0 10.5 8"><rect x="0" y="0" width="10.4" height="1.1" fill="#e8ecf1"/><rect x="0" y="3.3" width="10.4" height="1.1" fill="#e8ecf1"/><rect x="0" y="6.6" width="10.4" height="1.1" fill="#e8ecf1"/></svg>
<div class="t" style="left:700.50px;top:142.00px;font-size:8.6px;color:#fff;-webkit-text-stroke:0.45px currentColor;">Home</div>
<div class="a" style="left:728px;top:137.8px;width:102.00px;height:15.00px;border:1px solid #3f9a7d;border-radius:2.5px;box-sizing:border-box;"></div>
<svg class="a" style="left:732px;top:140.6px" width="9.5" height="9.5" viewBox="0 0 9.5 9.5"><ellipse cx="4.75" cy="3.2" rx="1.7" ry="3" transform="rotate(0 4.75 4.75)" stroke="#c9d0d7" stroke-width="0.6" fill="none"/><ellipse cx="4.75" cy="3.2" rx="1.7" ry="3" transform="rotate(60 4.75 4.75)" stroke="#c9d0d7" stroke-width="0.6" fill="none"/><ellipse cx="4.75" cy="3.2" rx="1.7" ry="3" transform="rotate(120 4.75 4.75)" stroke="#c9d0d7" stroke-width="0.6" fill="none"/><ellipse cx="4.75" cy="3.2" rx="1.7" ry="3" transform="rotate(180 4.75 4.75)" stroke="#c9d0d7" stroke-width="0.6" fill="none"/><ellipse cx="4.75" cy="3.2" rx="1.7" ry="3" transform="rotate(240 4.75 4.75)" stroke="#c9d0d7" stroke-width="0.6" fill="none"/><ellipse cx="4.75" cy="3.2" rx="1.7" ry="3" transform="rotate(300 4.75 4.75)" stroke="#c9d0d7" stroke-width="0.6" fill="none"/></svg>
<div class="t" style="left:743.80px;top:142.00px;font-size:8.5px;color:#d9dee4;-webkit-text-stroke:0.05px currentColor;transform:scaleX(0.8876);transform-origin:0 0;">claude-3.5-sonnet</div>
<svg class="a" style="left:807px;top:142.5px" width="8" height="8" viewBox="0 0 8 8"><circle cx="5.4" cy="2.5" r="1.8" stroke="#4fb38a" stroke-width="1.1" fill="none"/><path d="M4.2 3.8L0.9 7.1M2 6l1.1 1.1M3 5l0.9 0.9" stroke="#4fb38a" stroke-width="1.1"/></svg>
<svg class="a" style="left:818.3px;top:144.3px" width="6.5" height="4" viewBox="0 0 6.5 4"><path d="M0.6 0.6L3.2 3.2 5.8 0.6" stroke="#e3e7ec" stroke-width="1.1" fill="none"/></svg>
<svg class="a" style="left:993.5px;top:139.5px" width="11" height="11" viewBox="0 0 11 11"><path d="M5.50 0.30 L6.51 0.40 L6.99 1.90 L7.67 2.26 L9.18 1.82 L9.82 2.61 L9.10 4.01 L9.33 4.74 L10.70 5.50 L10.60 6.51 L9.10 6.99 L8.74 7.67 L9.18 9.18 L8.39 9.82 L6.99 9.10 L6.26 9.33 L5.50 10.70 L4.49 10.60 L4.01 9.10 L3.33 8.74 L1.82 9.18 L1.18 8.39 L1.90 6.99 L1.67 6.26 L0.30 5.50 L0.40 4.49 L1.90 4.01 L2.26 3.33 L1.82 1.82 L2.61 1.18 L4.01 1.90 L4.74 1.67z" stroke="#e3e7ec" stroke-width="0.9" fill="none" stroke-linejoin="round"/><circle cx="5.5" cy="5.5" r="1.8" stroke="#e3e7ec" stroke-width="0.9" fill="none"/></svg>
<div class="a" style="left:805.6px;top:160.2px;width:84.20px;height:17.90px;background:#fff;border:1px solid #d6dbe1;border-radius:3px;box-sizing:border-box;"></div>
<svg class="a" style="left:809.3px;top:166px" width="8.5" height="6" viewBox="0 0 8.5 6"><path d="M0.5 3C2 0.9 6.5 0.9 8 3 6.5 5.1 2 5.1 0.5 3z" stroke="#5a8fc4" stroke-width="0.8" fill="none"/><circle cx="4.25" cy="3" r="1.2" fill="#5a8fc4"/></svg>
<div class="t" style="left:821.00px;top:165.00px;font-size:9.0px;color:#333;-webkit-text-stroke:0.25px currentColor;transform:scaleX(0.9216);transform-origin:0 0;">Show instructions</div>
<div class="a" style="left:781.1px;top:183px;width:233.20px;height:20.20px;background:#1f2c3e;border-radius:5px;"></div>
<div class="t" style="left:788.50px;top:189.00px;font-size:9.2px;color:#f2f4f6;-webkit-text-stroke:0.1px currentColor;transform:scaleX(0.8793);transform-origin:0 0;">write a job description for a project manager position at Apple</div>
<div class="a" style="left:680.7px;top:208.3px;width:87.80px;height:21.50px;background:#fff;border:1px solid #dadfe5;border-radius:5px;box-sizing:border-box;box-shadow:0 1px 3px rgba(0,0,0,0.08);"></div>
<div class="t" style="left:688.50px;top:215.00px;font-size:8.6px;color:#a3a9b0;-webkit-text-stroke:0.14px currentColor;font-style:italic;transform:scaleX(0.9427);transform-origin:0 0;">Anthropic is typing...</div>
<div class="a" style="left:822px;top:471px;width:51.40px;height:15.00px;background:#dfe6ee;border-radius:3px;"></div>
<svg class="a" style="left:826px;top:473.5px" width="8" height="9" viewBox="0 0 8 9"><path d="M1.5 8L3.5 4.5 6 5.8 4.5 8.3z" fill="#e99a80"/><path d="M4.5 5L6.8 0.8" stroke="#c08060" stroke-width="0.8"/></svg>
<div class="t" style="left:836.00px;top:476.00px;font-size:7.8px;color:#b3bac3;-webkit-text-stroke:0.28px currentColor;transform:scaleX(0.9845);transform-origin:0 0;">Clear chat</div>
<div class="a" style="left:680.8px;top:491.7px;width:333.40px;height:61.50px;background:#eef1f6;border:1px solid #cdd3da;border-radius:4px;box-sizing:border-box;"></div>
<div class="a" style="left:681.8px;top:492.7px;width:331.40px;height:39.80px;background:#e3e8ef;border-radius:3px 3px 0 0;"></div>
<div class="a" style="left:681.8px;top:532.5px;width:331.40px;height:0.70px;background:#d5dae1;"></div>
<div class="a" style="left:685px;top:495.8px;width:8.70px;height:8.40px;background:#d0d4d9;border:1px solid #c0c5cb;border-radius:1.5px;box-sizing:border-box;"></div>
<svg class="a" style="left:686.5px;top:497.5px" width="6" height="5" viewBox="0 0 6 5"><path d="M0.6 2.5L2.3 4 5.4 0.8" stroke="#f4f5f6" stroke-width="0.9" fill="none"/></svg>
<div class="t" style="left:697.50px;top:496.00px;font-size:8.0px;color:#3c4148;-webkit-text-stroke:0.28px currentColor;transform:scaleX(0.9094);transform-origin:0 0;">Using</div>
<div class="t" style="left:718.70px;top:496.00px;font-size:8.0px;color:#2e6db4;-webkit-text-stroke:0.28px currentColor;transform:scaleX(0.9667);transform-origin:0 0;">full document</div>
<div class="t" style="left:766.70px;top:496.00px;font-size:8.0px;color:#3c4148;-webkit-text-stroke:0.28px currentColor;transform:scaleX(0.9489);transform-origin:0 0;">as context</div>
<svg class="a" style="left:1001.9px;top:496px" width="9" height="9" viewBox="0 0 9 9"><circle cx="4.4" cy="4.1" r="3.9" stroke="#8a9097" stroke-width="0.75" fill="none"/><path d="M4.4 3.5v2.8" stroke="#8a9097" stroke-width="0.8"/><circle cx="4.4" cy="2.2" r="0.5" fill="#8a9097"/></svg>
<div class="t" style="left:687.50px;top:515.00px;font-size:8.4px;color:#9aa1a9;-webkit-text-stroke:0.14px currentColor;font-style:italic;transform:scaleX(0.9541);transform-origin:0 0;">Ask anything... Select text to use it</div>
<div class="a" style="left:686.2px;top:539.7px;width:15.5px;height:7.8px;border-radius:4px;background:#cfd5dc;"></div>
<div class="a" style="left:686.7px;top:540.2px;width:6.8px;height:6.8px;border-radius:50%;background:#fff;"></div>
<div class="t" style="left:706.30px;top:540.00px;font-size:7.6px;color:#3c4148;-webkit-text-stroke:0.2px currentColor;transform:scaleX(0.9774);transform-origin:0 0;">Plain text mode</div>
<div class="a" style="left:975.8px;top:535.3px;width:35.70px;height:16.20px;background:#d8353d;border-radius:2.5px;"></div>
<div class="a" style="left:980.7px;top:540px;width:6.20px;height:6.50px;background:#f1c7c9;border-radius:1px;"></div>
<div class="t" style="left:991.70px;top:539.00px;font-size:8.6px;color:#fff;-webkit-text-stroke:0.3px currentColor;transform:scaleX(0.8931);transform-origin:0 0;">Stop</div>
<div class="a" style="left:675.8px;top:558.7px;width:342.95px;height:20.50px;background:#172537;"></div>
<div class="a" style="left:675.8px;top:579.2px;width:342.95px;height:2.80px;background:#6b7682;"></div>
<div class="a" style="left:675.8px;top:579.2px;width:123.40px;height:2.80px;background:#4aa886;"></div>
<div class="t" style="left:680.80px;top:564.00px;font-size:7.8px;color:#67c2a1;-webkit-text-stroke:0.05px currentColor;transform:scaleX(0.9243);transform-origin:0 0;">$6.79 remaining</div>
<div class="a" style="left:680.8px;top:573px;width:51.70px;height:0.60px;background:#4c6e72;"></div>
<svg class="a" style="left:735px;top:564.2px" width="9" height="9" viewBox="0 0 9 9"><circle cx="4.4" cy="4.5" r="3.9" stroke="#c8cfd6" stroke-width="0.75" fill="none"/><path d="M4.4 3.8v2.8" stroke="#c8cfd6" stroke-width="0.8"/><circle cx="4.4" cy="2.5" r="0.5" fill="#c8cfd6"/></svg>
<div class="a" style="left:979.2px;top:562.1px;width:37.50px;height:14.60px;background:#3d4b5a;border-radius:3px;"></div>
<div class="t" style="left:982.50px;top:566.00px;font-size:8.2px;color:#f2f4f6;-webkit-text-stroke:0.3px currentColor;transform:scaleX(0.8777);transform-origin:0 0;">Buy more</div>
<div class="a" style="left:56px;top:589px;width:968.00px;height:18.00px;background:#f3f3f3;"></div>
<div class="a" style="left:54px;top:606.8px;width:971.00px;height:1.20px;background:#b4c4d8;"></div>
<div class="t" style="left:64.80px;top:595.00px;font-size:7.0px;color:#444;-webkit-text-stroke:0.14px currentColor;transform:scaleX(0.8295);transform-origin:0 0;">Page 1 of 1</div>
<div class="t" style="left:112.30px;top:595.00px;font-size:7.0px;color:#444;-webkit-text-stroke:0.14px currentColor;transform:scaleX(0.8160);transform-origin:0 0;">0 words</div>
<svg class="a" style="left:150px;top:595px" width="9" height="8" viewBox="0 0 9 8"><path d="M0.5 0.8h3c.6 0 1 .4 1 1v5.6c0-.6-.4-1-1-1h-3zM8.5 0.8h-3c-.6 0-1 .4-1 1v5.6c0-.6.4-1 1-1h3z" stroke="#555" stroke-width="0.8" fill="none"/></svg>
<div class="t" style="left:177.30px;top:595.00px;font-size:7.0px;color:#444;-webkit-text-stroke:0.14px currentColor;transform:scaleX(0.8382);transform-origin:0 0;">Text Predictions: On</div>
<svg class="a" style="left:247.8px;top:595px" width="9" height="8" viewBox="0 0 9 8"><path d="M1 2h6M4 1v3.5L2.2 7.5M4 4.5l1.8 3" stroke="#555" stroke-width="0.8" fill="none"/><circle cx="4" cy="0.6" r="0.6" fill="#555"/><path d="M5.5 5.8l1.2 1.3 2-2.4" stroke="#555" stroke-width="0.8" fill="none"/></svg>
<div class="t" style="left:258.30px;top:595.00px;font-size:7.0px;color:#444;-webkit-text-stroke:0.14px currentColor;transform:scaleX(0.8598);transform-origin:0 0;">Accessibility: Good to go</div>
<svg class="a" style="left:801px;top:594.3px" width="9" height="8.5" viewBox="0 0 9 8.5"><path d="M0.5 2.5V0.5h2M6.5 0.5h2v2M8.5 6v2h-2M2.5 8h-2V6" stroke="#555" stroke-width="0.8" fill="none"/><rect x="2.5" y="2.3" width="4" height="4" stroke="#555" stroke-width="0.8" fill="none"/></svg>
<div class="t" style="left:811.60px;top:595.00px;font-size:7.0px;color:#444;-webkit-text-stroke:0.14px currentColor;transform:scaleX(0.7921);transform-origin:0 0;">Focus</div>
<svg class="a" style="left:844px;top:594.5px" width="9" height="8.5" viewBox="0 0 9 8.5"><path d="M0.5 0.8h3.2c.5 0 .8.3.8.8V7.8H0.5zM8.5 0.8H5.3c-.5 0-.8.3-.8.8V7.8h4z" stroke="#555" stroke-width="0.8" fill="#9a9a9a"/></svg>
<div class="a" style="left:860.7px;top:589.4px;width:24.40px;height:16.60px;background:#e1e3e6;"></div>
<svg class="a" style="left:868.9px;top:594px" width="7.5" height="9" viewBox="0 0 7.5 9"><rect x="0.5" y="0.5" width="6.3" height="8" rx="0.6" stroke="#555" stroke-width="0.8" fill="#9d9d9d"/><path d="M2 2.5h3.3M2 4.3h3.3M2 6.1h3.3" stroke="#e6e6e6" stroke-width="0.5"/></svg>
<svg class="a" style="left:892.7px;top:594.5px" width="9.5" height="9" viewBox="0 0 9.5 9"><rect x="0.5" y="0.5" width="7" height="7.5" stroke="#555" stroke-width="0.8" fill="none"/><circle cx="6.8" cy="6.5" r="2.6" fill="#444"/><path d="M6.8 5.5v2.2" stroke="#fff" stroke-width="0.6"/></svg>
<div class="a" style="left:913.3px;top:598.3px;width:3.80px;height:0.70px;background:#777;"></div>
<div class="a" style="left:921.1px;top:598.4px;width:56.70px;height:0.80px;background:#9a9a9a;"></div>
<div class="a" style="left:948.9px;top:595px;width:2.90px;height:7.30px;background:#555;border-radius:1px;"></div>
<svg class="a" style="left:981px;top:595.5px" width="4.5" height="6" viewBox="0 0 4.5 6"><path d="M0 3h4.2M2.1 0.8v4.4" stroke="#555" stroke-width="0.8"/></svg>
<div class="t" style="left:996.70px;top:595.00px;font-size:7.0px;color:#444;-webkit-text-stroke:0.14px currentColor;transform:scaleX(0.8284);transform-origin:0 0;">110%</div>
</body></html>
